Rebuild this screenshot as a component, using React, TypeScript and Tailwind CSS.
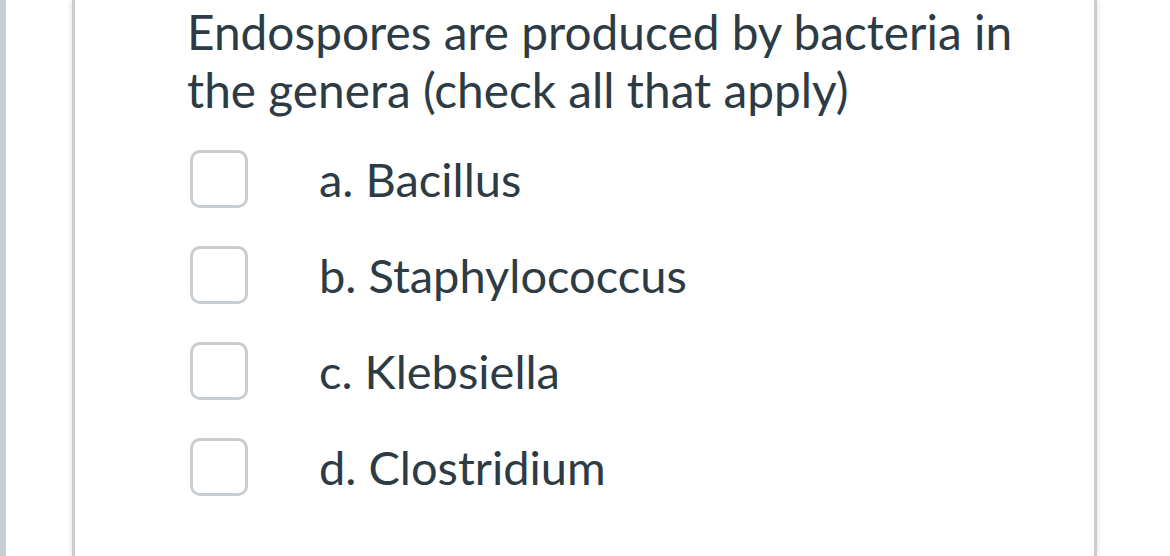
const options = ["a. Bacillus", "b. Staphylococcus", "c. Klebsiella", "d. Clostridium"];

export default function App() {
  return (
    <div className="flex h-[556px] w-[1170px] overflow-hidden bg-white font-['Lato',sans-serif] text-[#2d3b45]">
      <div className="w-[6px] shrink-0 bg-[#c7cdd1]" />
      <div className="w-[66px] shrink-0" />
      <div className="w-[1025px] shrink-0 border-x-[3px] border-[#c7cdd1] bg-white shadow-[0_0_6px_rgba(0,0,0,0.15)]">
        <div className="w-[960px] pl-[112px]">
          <p className="pt-[3px] text-[47.8px] leading-[58px]">
            Endospores are produced by bacteria in the genera (check all that apply)
          </p>
          <ul className="mt-[31px] flex flex-col gap-[38px]">
            {options.map((o) => (
              <li key={o} className="flex items-center">
                <span className="ml-[3px] h-[58px] w-[58px] shrink-0 rounded-[10px] border-[3px] border-[#c7cdd1] bg-white" />
                <span className="ml-[71px] text-[47px] leading-[58px]">{o}</span>
              </li>
            ))}
          </ul>
        </div>
      </div>
    </div>
  );
}
